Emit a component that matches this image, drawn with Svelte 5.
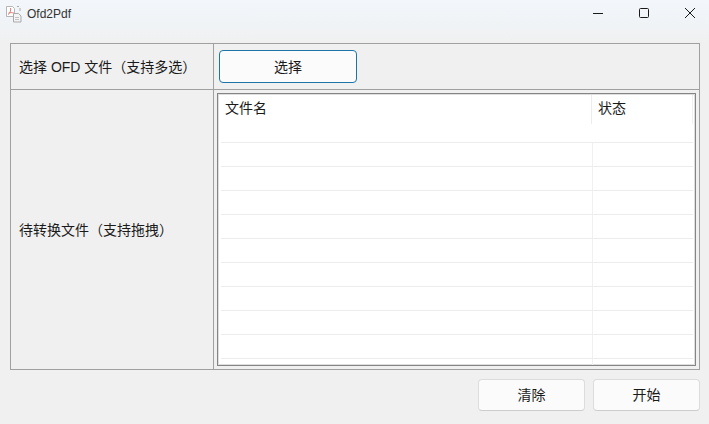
<script>
  const rows = Array.from({ length: 10 }, (_, i) => i);
</script>

<div class="window">
  <header class="titlebar">
    <div class="title">
      <svg class="app-icon" width="18" height="18" viewBox="0 0 18 18" fill="none">
        <path d="M1.500 1.500h6l2 2v8h-8z" fill="#fff" stroke="#b5b5b5" />
        <path d="M3 9.500c2-1 3-4 2.600-6.500M3.500 8c1.500-.5 4-.6 5.500.2" stroke="#dd7a74" stroke-width="1" />
        <path d="M8.500 8.500h5l2.500 2.500v6h-7.500z" fill="#f4f4f4" stroke="#a9a9a9" />
        <path d="M10 12.500h4M10 14.500h4" stroke="#c4c4c4" />
        <path d="M12 1.500h2M15 3v3" stroke="#a9a9a9" />
      </svg>
      <span>Ofd2Pdf</span>
    </div>
    <div class="controls">
      <svg width="12" height="12" viewBox="0 0 12 12"><path d="M1 6.500h10" stroke="#1a1a1a" /></svg>
      <svg width="12" height="12" viewBox="0 0 12 12" fill="none"><rect x="1.500" y="1.500" width="9" height="9" rx="1" stroke="#1a1a1a" /></svg>
      <svg width="12" height="12" viewBox="0 0 12 12"><path d="M1 1l10 10M11 1L1 11" stroke="#1a1a1a" /></svg>
    </div>
  </header>

  <main class="content">
    <section class="form">
      <div class="label top">选择 OFD 文件（支持多选）</div>
      <div class="field top">
        <button class="btn primary">选择</button>
      </div>
      <div class="label">待转换文件（支持拖拽）</div>
      <div class="field">
        <div class="table">
          <div class="thead">
            <div class="th name">文件名</div>
            <div class="th status">状态</div>
          </div>
          <div class="tbody">
            {#each rows as row (row)}
              <div class="tr"><div class="td name"></div><div class="td status"></div></div>
            {/each}
          </div>
        </div>
      </div>
    </section>

    <footer class="actions">
      <button class="btn">清除</button>
      <button class="btn">开始</button>
    </footer>
  </main>
</div>

<style>
  :global(body) {
    margin: 0;
    background: #f0f0f0;
  }

  .window {
    width: 709px;
    height: 424px;
    overflow: hidden;
    display: flex;
    flex-direction: column;
    font-family: "Liberation Sans", "Noto Sans CJK SC", sans-serif;
    font-size: 14px;
    color: #1a1a1a;
    background: #f0f0f0;
  }

  .titlebar {
    height: 43px;
    flex: none;
    display: flex;
    justify-content: space-between;
    align-items: flex-start;
    background: linear-gradient(#f3f6fa 0, #f0f3f6 26px, #f0f0f0 43px);
  }

  .title {
    display: flex;
    align-items: center;
    gap: 4px;
    padding: 5px 0 0 5px;
    font-size: 12px;
    color: #333;
  }

  .app-icon {
    display: block;
  }

  .controls {
    display: flex;
    gap: 34px;
    padding: 7px 13px 0 0;
  }

  .controls svg {
    display: block;
  }

  .content {
    flex: 1;
    min-height: 0;
    display: flex;
    flex-direction: column;
    padding: 0 9px 0 10px;
  }

  .form {
    box-sizing: border-box;
    height: 327px;
    flex: none;
    display: grid;
    grid-template-columns: 203px minmax(0, 1fr);
    grid-template-rows: 46px minmax(0, 1fr);
    border: 1px solid #a0a0a0;
  }

  .label {
    display: flex;
    align-items: center;
    padding: 0 0 2px 8px;
    border-right: 1px solid #a0a0a0;
  }

  .top {
    border-bottom: 1px solid #a0a0a0;
  }

  .field {
    min-width: 0;
    min-height: 0;
    padding: 3px;
  }

  .field.top {
    padding: 6px 5px;
  }

  .btn {
    box-sizing: border-box;
    width: 107px;
    height: 32px;
    padding: 0 0 2px;
    border: 1px solid #dcdcdc;
    border-bottom-color: #cdcdcd;
    border-radius: 4px;
    background: #fbfbfb;
    color: #1a1a1a;
    font: inherit;
  }

  .btn.primary {
    width: 138px;
    height: 33px;
    border-color: #1b76a8;
  }

  .table {
    box-sizing: border-box;
    height: 100%;
    overflow: hidden;
    border: 1px solid #858585;
    box-shadow: inset 0 0 0 1px #dedede;
    background: #fff;
    padding: 1px 2px 1px 3px;
  }

  .thead {
    display: flex;
    height: 29px;
  }

  .th {
    box-sizing: border-box;
    padding-top: 4px;
    line-height: 18px;
  }

  .th.name {
    padding-left: 4px;
    border-right: 1px solid #ececec;
  }

  .th.status {
    padding-left: 6px;
    border-right: 1px solid #f0f0f0;
  }

  .name {
    width: 371px;
    flex: none;
  }

  .status {
    flex: 1;
  }

  .tbody {
    padding-top: 18px;
  }

  .tr {
    display: flex;
    height: 24px;
    box-sizing: border-box;
    border-top: 1px solid #ececec;
  }

  .td.name {
    border-right: 1px solid #f0f0f0;
  }

  .actions {
    display: flex;
    justify-content: flex-end;
    gap: 8px;
    padding-top: 9px;
  }
</style>
